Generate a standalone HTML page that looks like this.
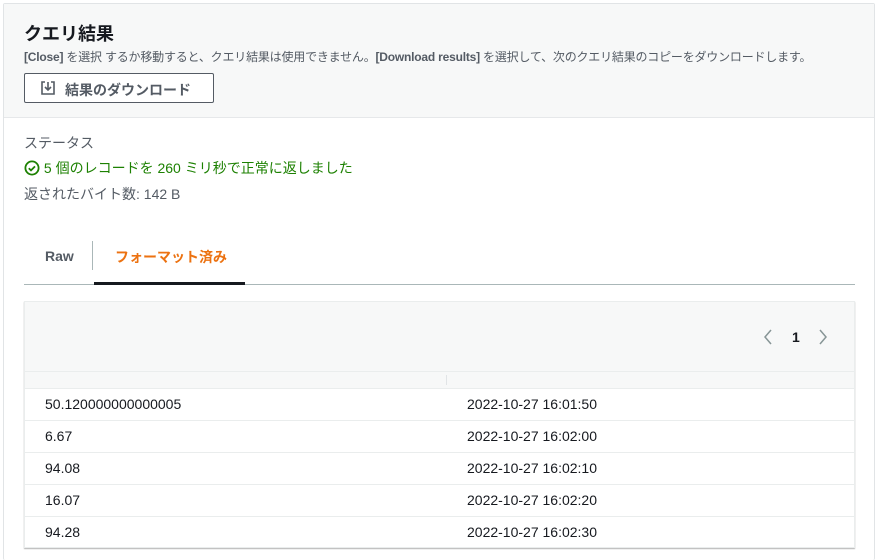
<!DOCTYPE html>
<html><head><meta charset="utf-8"><style>
*{box-sizing:border-box;margin:0;padding:0}
html,body{width:879px;height:560px;overflow:hidden}
body{background:#fff;font-family:"Liberation Sans","Noto Sans CJK JP",sans-serif;color:#16191f;position:relative}
.card{position:absolute;left:3px;top:3px;width:872px;height:557px;border:1px solid #e1e4e6;border-bottom:none;border-radius:2px;background:#fff}
.hdr{position:absolute;left:0;top:0;right:0;height:114px;background:#f7f8f8;border-bottom:1px solid #e6e8ea}
.abs{position:absolute;white-space:nowrap}
.btn{position:absolute;left:20px;top:69px;width:190px;height:30px;border:1px solid #545b64;border-radius:2px;background:#fff;font-weight:bold;font-size:14px;color:#545b64}
.tbl{position:absolute;left:20px;top:297px;width:831px;height:247px;border:1px solid #eaeded;box-shadow:0 1px 1px rgba(0,0,0,.3)}
.row{position:absolute;left:0;right:0;height:32px;border-top:1px solid #eaeded;font-size:14px;color:#16191f}
.row span{position:absolute;top:7px}
</style></head><body>
<div class="card">
<div class="hdr">
<div class="abs" style="left:20px;top:16px;font-size:18px;font-weight:bold">クエリ結果</div>
<div class="abs" style="left:20px;top:44px;font-size:12px;letter-spacing:-0.2px;color:#545b64"><b>[Close]</b> を選択 するか移動すると、クエリ結果は使用できません。<b>[Download results]</b> を選択して、次のクエリ結果のコピーをダウンロードします。</div>
<div class="btn">
<svg style="position:absolute;left:16px;top:7px" width="14" height="14" viewBox="0 0 14 14" fill="none" stroke="#545b64" stroke-width="1.6"><path d="M4 1H1v12h12V1h-3M7 1v8M4 6l3 3 3-3"/></svg>
<span class="abs" style="left:40px;top:6px">結果のダウンロード</span></div>
</div>
<div class="abs" style="left:20px;top:129px;font-size:14px;color:#545b64">ステータス</div>
<div class="abs" style="left:20px;top:154px;font-size:14px;color:#1d8102">
<svg style="vertical-align:-3px" width="16" height="16" viewBox="0 0 16 16" fill="none" stroke="#1d8102" stroke-width="1.8"><circle cx="8" cy="8" r="6.6"/><path d="M4.8 8.2l2.2 2.2 4-4"/></svg> 5 個のレコードを 260 ミリ秒で正常に返しました</div>
<div class="abs" style="left:20px;top:180px;font-size:14px;color:#545b64">返されたバイト数: 142 B</div>
<div class="abs" style="left:41px;top:244px;font-size:14px;font-weight:bold;color:#545b64">Raw</div>
<div class="abs" style="left:88px;top:237px;width:1px;height:29px;background:#aab7b8"></div>
<div class="abs" style="left:111px;top:243px;font-size:14px;font-weight:bold;color:#ec7211">フォーマット済み</div>
<div class="abs" style="left:20px;top:280px;width:831px;height:1px;background:#aab7b8"></div>
<div class="abs" style="left:90px;top:278px;width:151px;height:3px;background:#16191f"></div>
<div class="tbl">
<div class="abs" style="left:0;top:0;right:0;height:69px;background:#f7f8f8"></div>
<svg class="abs" style="left:738px;top:27px" width="10" height="16" viewBox="0 0 10 16" fill="none" stroke="#879596" stroke-width="1.5"><path d="M8 1L2 8l6 7"/></svg>
<div class="abs" style="left:767px;top:27px;font-size:14px;font-weight:bold">1</div>
<svg class="abs" style="left:793px;top:27px" width="10" height="16" viewBox="0 0 10 16" fill="none" stroke="#879596" stroke-width="1.5"><path d="M2 1l6 7-6 7"/></svg>
<div class="abs" style="left:0;top:69px;right:0;height:17px;background:#f7f8f8;border-top:1px solid #eaeded"></div>
<div class="abs" style="left:421px;top:73px;width:1px;height:10px;background:#e1e4e6"></div>
<div class="row" style="top:86px"><span style="left:20px">50.120000000000005</span><span style="left:442px">2022-10-27 16:01:50</span></div>
<div class="row" style="top:118px"><span style="left:20px">6.67</span><span style="left:442px">2022-10-27 16:02:00</span></div>
<div class="row" style="top:150px"><span style="left:20px">94.08</span><span style="left:442px">2022-10-27 16:02:10</span></div>
<div class="row" style="top:182px"><span style="left:20px">16.07</span><span style="left:442px">2022-10-27 16:02:20</span></div>
<div class="row" style="top:214px"><span style="left:20px">94.28</span><span style="left:442px">2022-10-27 16:02:30</span></div>
</div>
</div>
</body></html>
